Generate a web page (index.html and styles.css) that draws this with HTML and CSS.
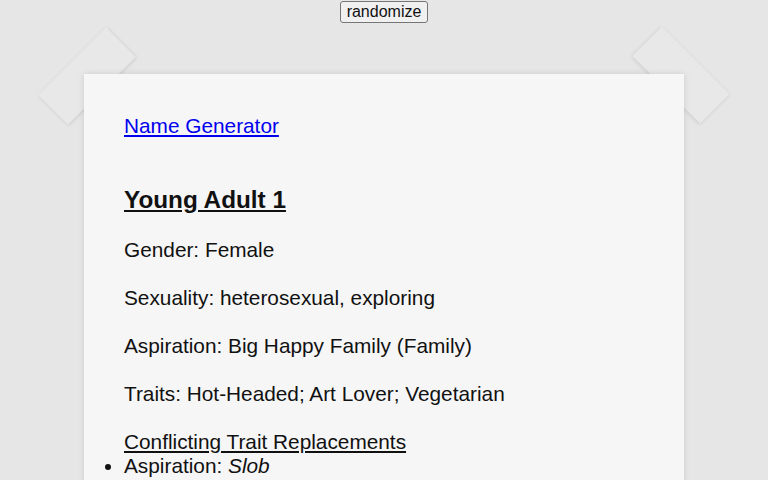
FILE: index.html
```html
<!DOCTYPE html>
<html>
<head>
<meta charset="utf-8">
<link rel="stylesheet" href="styles.css">
</head>
<body>
<div class="top">
  <button class="btn">randomize</button>
</div>
<div class="card">
  <p class="first"><a href="#">Name Generator</a></p>
  <h3 class="title">Young Adult 1</h3>
  <p>Gender: Female</p>
  <p>Sexuality: heterosexual, exploring</p>
  <p>Aspiration: Big Happy Family (Family)</p>
  <p>Traits: Hot-Headed; Art Lover; Vegetarian</p>
  <p class="sub">Conflicting Trait Replacements</p>
  <ul class="list">
    <li>Aspiration: <em>Slob</em></li>
  </ul>
</div>
</body>
</html>
```
FILE: styles.css
```css
html {
  background: #e6e6e6;
}
body {
  margin: 0;
  padding: 0;
  font-family: "Liberation Sans", Arial, sans-serif;
  color: #111;
}
.top {
  display: flex;
  justify-content: center;
  padding-top: 1px;
}
.btn {
  font-family: "Liberation Sans", Arial, sans-serif;
  font-size: 16px;
  line-height: 18px;
  padding: 1px 6px;
  color: #111;
  background: #f0f0f0;
  border: 1px solid #767676;
  border-radius: 3px;
}
.card {
  position: relative;
  width: 520px;
  margin: 51px auto 0;
  padding: 40px;
  background: #f6f6f6;
  box-shadow: 0 0 6px rgba(0,0,0,0.12);
  font-size: 20.8px;
  line-height: 24px;
}
.card::before,
.card::after {
  content: "";
  position: absolute;
  width: 96px;
  height: 42px;
  background: #e8e8e8;
  box-shadow: 0 1px 4px rgba(0,0,0,0.12);
  z-index: -1;
}
.card::before {
  left: -45px;
  top: -19px;
  transform: rotate(-45deg);
}
.card::after {
  left: 549px;
  top: -20px;
  transform: rotate(45deg);
}
.card p {
  margin: 24px 0;
}
.card p.first {
  margin-top: 0;
  margin-bottom: 48px;
}
.card a {
  color: #0000ee;
}
.title {
  font-size: 24.3px;
  line-height: 28px;
  text-decoration: underline;
  margin: 0 0 24px;
}
.card p.sub {
  text-decoration: underline;
  margin-bottom: 0;
}
.list {
  margin: 0;
  padding-left: 0;
}
```
